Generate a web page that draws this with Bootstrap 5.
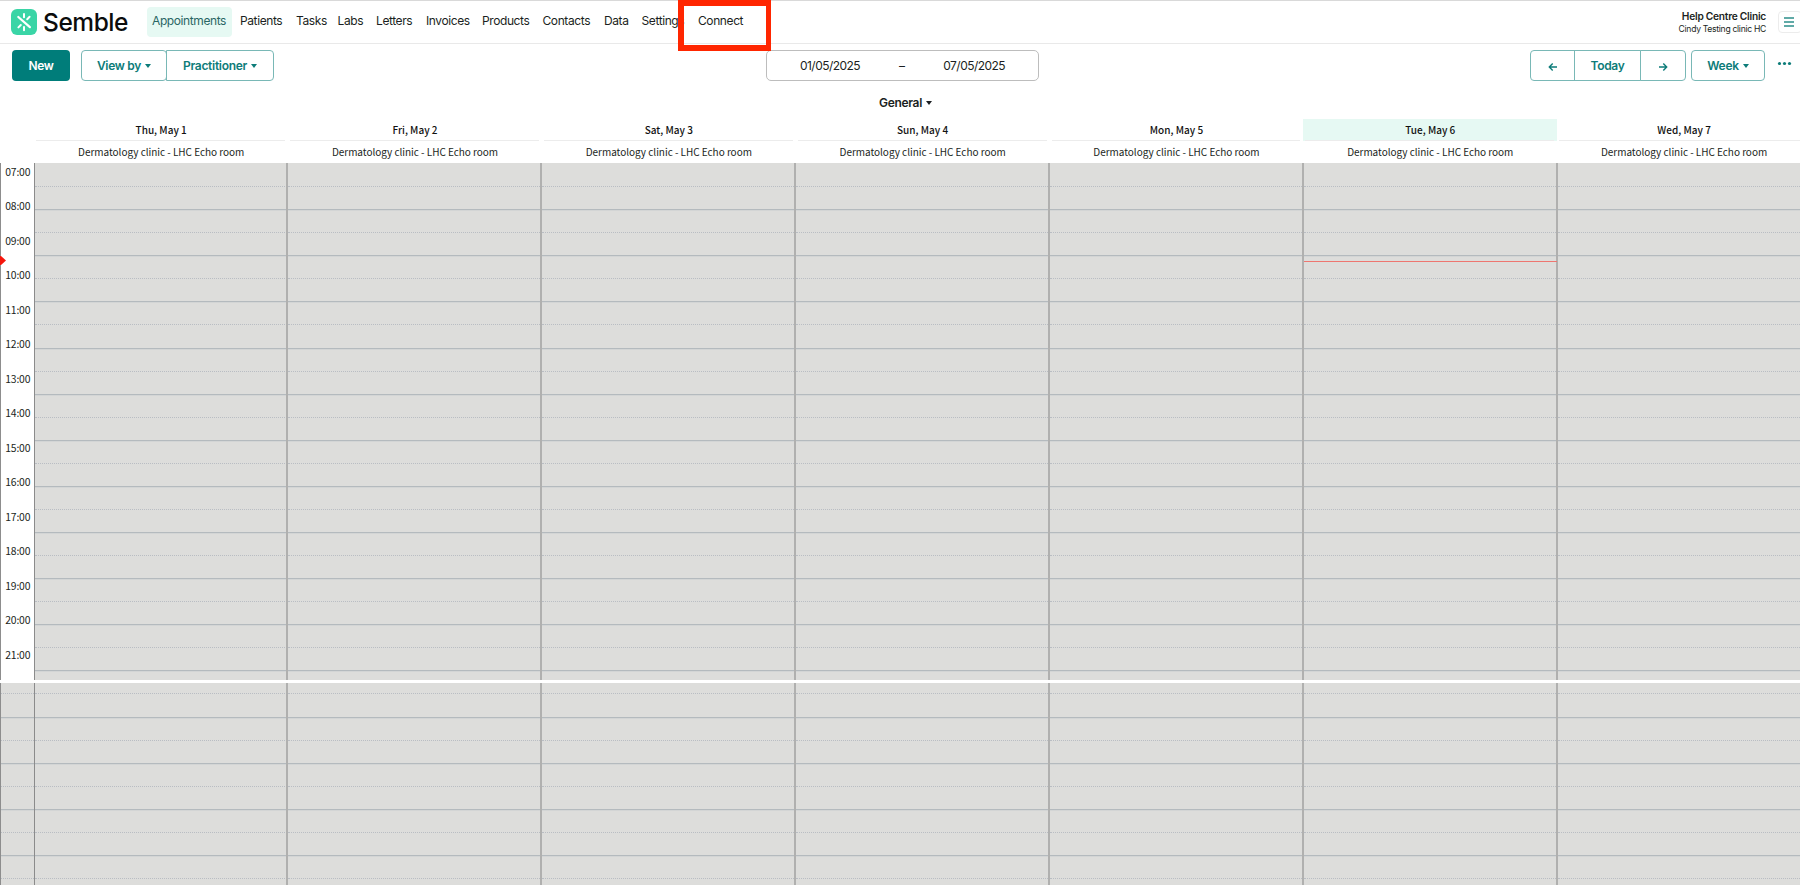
<!DOCTYPE html>
<html lang="en">
<head>
  <meta charset="UTF-8" />
  <meta name="viewport" content="width=device-width, initial-scale=1" />
  <title>Semble - Appointments</title>
  <link href="https://cdn.jsdelivr.net/npm/bootstrap@5.3.0/dist/css/bootstrap.min.css" rel="stylesheet" />
  <style>
    body {
      height: 885px;
      overflow: hidden;
      font-family: Inter, "Liberation Sans", sans-serif;
      font-size: 12px;
      line-height: 16px;
      color: #1b1f22;
      background: #fff;
    }
    .app-header {
      height: 44px;
      border-top: 1px solid #d9d9d9;
      border-bottom: 1px solid #e9e9e9;
      padding-left: 11px;
    }
    .brand-icon { width: 26px; height: 26px; }
    .brand-name {
      width: 85.5px;
      margin: 0 18px 0 6px;
      font-size: 24.5px;
      font-weight: 500;
      line-height: 30px;
      letter-spacing: -.45px;
      color: #0b0c0c;
    }
    .main-nav {
      grid-template-columns: 86.5px 56px 41.5px 38.5px 50px 56px 60.5px 61.5px 37.5px 56.5px 60px;
      height: 30px;
    }
    .main-nav .nav-link {
      padding: 0 0 0 7px;
      line-height: 28px;
      letter-spacing: -.4px;
      color: #1b1f22;
      white-space: nowrap;
    }
    .main-nav .nav-link.active {
      width: 85px;
      padding-left: 5.5px;
      border-radius: 4px;
      background: #e6f9f3;
      color: #2a6664;
    }
    .clinic { width: 120px; margin-right: 12px; }
    .clinic-name { font-size: 10.2px; font-weight: 600; line-height: 13px; letter-spacing: -.25px; }
    .clinic-user { font-size: 8.6px; line-height: 12px; letter-spacing: -.3px; }
    .menu-btn {
      width: 24px;
      height: 22px;
      margin-right: -2px;
      border: 1px solid #ececec;
      border-radius: 4px;
    }
    .highlight {
      position: absolute;
      left: 678px;
      top: 0;
      width: 93px;
      height: 51px;
      border: 6px solid #ff2600;
      border-width: 6px 5px 6px 6px;
      z-index: 5;
    }
    .toolbar { height: 46px; padding: 6px 8px 0 12px; }
    .toolbar .btn {
      height: 31px;
      padding: 0;
      border-radius: 4px;
      font-size: 12px;
      font-weight: 600;
      line-height: 27px;
      letter-spacing: -.3px;
    }
    .btn-new { width: 58px; background: #007d7a; color: #fff; }
    .btn-line { border: 1px solid #79b8b6; color: #0d7c79; background: #fff; }
    .toolbar .dropdown-toggle::after, .calendar-name::after {
      margin-left: 4px;
      vertical-align: 2px;
      border-width: 3px;
      border-top-width: 4px;
      border-bottom: 0;
    }
    .view-group { margin-left: 11px; }
    .w-view { width: 86px; }
    .w-practitioner { width: 108px; }
    .w-prev { width: 45px; }
    .w-today { width: 67px; }
    .w-next { width: 46px; }
    .w-week { width: 74px; margin: 0 12px 0 5px; }
    .date-range {
      width: 273px;
      height: 31px;
      border: 1px solid #bdbdbd;
      border-radius: 5px;
      padding: 0 33px 0 33px;
      letter-spacing: -.55px;
    }
    .toolbar-left { width: 754px; }
    .calendar-name { height: 29px; padding-top: 5px; padding-left: 11px; font-weight: 600; letter-spacing: -.3px; }
    .calendar { font-family: "Noto Sans CJK SC", "Noto Sans", sans-serif; }
    .day-heads, .slots { width: 1811px; }
    .day-heads { height: 44px; padding-left: 34.3px; font-size: 10px; }
    .day-head { flex: 1 1 0; }
    .day-label { height: 22px; line-height: 22px; font-weight: 500; color: #111; }
    .day-label::after {
      content: "";
      display: block;
      height: 1px;
      margin: -1px 3px 0 2px;
      background: #ececec;
    }
    .today .day-label { background: #e6f9f3; }
    .room { line-height: 22px; letter-spacing: -.03px; }
    .slots { height: 722px; overflow: hidden; }
    .gutter { width: 34.3px; flex: none; border-left: 1px solid #8d8d8d; position: relative; }
    .hours { height: 517px; width: 100%; padding-top: 1px; background: #fff; position: absolute; left: 0; top: 0; }
    .hour { height: 34.47px; line-height: 15px; font-size: 10.4px; letter-spacing: -.2px; padding-left: 4.3px; }
    .day { flex: 1 1 0; border-left: 1px solid #8b8b8b; }
    .day + .day { border-left: 2px solid #b0b0af; margin-left: -1px; padding-right: 1px; }
    .day, .gutter { background: #dddddb; overflow: hidden; }
    .slot { height: 23.075px; border-top: 1px dotted #b9bdc3; }
    .slot:nth-child(odd) { border-top: 1px solid #b4babe; box-shadow: inset 0 1px #d3d5d5; }
    .slot:first-child { border-top-color: transparent; box-shadow: none; }
    .hours-end { height: 3px; background: #fff; position: absolute; left: 0; right: 0; top: 517px; }
    .now-line { height: 1px; background: #ee7670; position: absolute; left: 1304px; width: 253px; top: 98px; }
    .now-arrow { position: absolute; left: 0; top: 93px; }
  </style>
</head>
<body>

  <!-- Top navigation -->
  <header class="app-header d-flex align-items-center">
    <svg class="brand-icon flex-shrink-0" viewBox="0 0 26 26">
      <rect width="26" height="26" rx="6" fill="#3ad5a6" />
      <g stroke="#fff" stroke-linecap="round" fill="none">
        <path d="M7.3 8L18.9 18.2" stroke-width="2.2" />
        <path d="M13 5V8.2M13 18V21.2M18.6 7.8L16.2 10.2M7.4 18.4L9.8 16" stroke-width="2" />
      </g>
    </svg>
    <span class="brand-name">Semble</span>
    <nav class="main-nav d-grid">
      <a class="nav-link active" href="#">Appointments</a>
      <a class="nav-link" href="#">Patients</a>
      <a class="nav-link" href="#">Tasks</a>
      <a class="nav-link" href="#">Labs</a>
      <a class="nav-link" href="#">Letters</a>
      <a class="nav-link" href="#">Invoices</a>
      <a class="nav-link" href="#">Products</a>
      <a class="nav-link" href="#">Contacts</a>
      <a class="nav-link" href="#">Data</a>
      <a class="nav-link" href="#">Settings</a>
      <a class="nav-link" href="#">Connect</a>
    </nav>
    <div class="clinic ms-auto text-end">
      <div class="clinic-name">Help Centre Clinic</div>
      <div class="clinic-user">Cindy Testing clinic HC</div>
    </div>
    <div class="menu-btn d-flex align-items-center ps-1">
      <svg width="12" height="10" viewBox="0 0 12 10" stroke="#2c8e8b" stroke-width="1.4"><path d="M1 1H11M1 5H11M1 9H11" /></svg>
    </div>
  </header>
  <div class="highlight"></div>

  <!-- Toolbar -->
  <div class="toolbar d-flex">
    <div class="toolbar-left d-flex">
      <button type="button" class="btn btn-new">New</button>
      <div class="btn-group view-group">
        <button type="button" class="btn btn-line dropdown-toggle w-view">View by</button>
        <button type="button" class="btn btn-line dropdown-toggle w-practitioner">Practitioner</button>
      </div>
    </div>
    <div class="date-range d-flex align-items-center justify-content-between">
      <span>01/05/2025</span><span>–</span><span>07/05/2025</span>
    </div>
    <div class="d-flex ms-auto">
      <div class="btn-group">
        <button type="button" class="btn btn-line w-prev" aria-label="Previous">
          <svg width="10" height="10" viewBox="0 0 10 10" fill="none" stroke="currentColor" stroke-width="1.4"><path d="M9 5H1.5M4.7 1.6L1.3 5L4.7 8.4" /></svg>
        </button>
        <button type="button" class="btn btn-line w-today">Today</button>
        <button type="button" class="btn btn-line w-next" aria-label="Next">
          <svg width="10" height="10" viewBox="0 0 10 10" fill="none" stroke="currentColor" stroke-width="1.4"><path d="M1 5H8.5M5.3 1.6L8.7 5L5.3 8.4" /></svg>
        </button>
      </div>
      <button type="button" class="btn btn-line dropdown-toggle w-week">Week</button>
      <svg class="mt-2" width="15" height="11" viewBox="0 0 15 11" fill="#0d7c79">
        <circle cx="2.5" cy="5.5" r="1.6" /><circle cx="7.5" cy="5.5" r="1.6" /><circle cx="12.5" cy="5.5" r="1.6" />
      </svg>
    </div>
  </div>
  <div class="calendar-name dropdown-toggle text-center">General</div>

  <!-- Week calendar -->
  <main class="calendar">
    <div class="day-heads d-flex text-center" id="dayHeads"></div>
    <div class="position-relative">
      <div class="slots d-flex" id="slots">
        <div class="gutter">
          <div id="gutterSlots"></div>
          <div class="hours" id="hours"></div>
        </div>
      </div>
      <div class="hours-end"></div>
      <div class="now-line"></div>
      <svg class="now-arrow" width="6" height="9" viewBox="0 0 6 9"><path d="M0 0H1L6 4.5L1 9H0Z" fill="#f5160c" /></svg>
    </div>
  </main>

<script>
  const days = ['Thu, May 1', 'Fri, May 2', 'Sat, May 3', 'Sun, May 4', 'Mon, May 5', 'Tue, May 6', 'Wed, May 7'];
  const slotRows = '<div class="slot"></div>'.repeat(32);

  document.getElementById('gutterSlots').innerHTML = slotRows;

  days.forEach(day => {
    document.getElementById('dayHeads').insertAdjacentHTML('beforeend',
      `<div class="day-head ${day === 'Tue, May 6' ? 'today' : ''}"><div class="day-label">${day}</div><div class="room">Dermatology clinic - LHC Echo room</div></div>`);
    document.getElementById('slots').insertAdjacentHTML('beforeend', `<div class="day">${slotRows}</div>`);
  });

  for (let h = 7; h <= 21; h++) {
    document.getElementById('hours').insertAdjacentHTML('beforeend',
      `<div class="hour">${String(h).padStart(2, '0')}:00</div>`);
  }
</script>
<script src="https://cdn.jsdelivr.net/npm/bootstrap@5.3.0/dist/js/bootstrap.bundle.min.js"></script>
</body>
</html>
